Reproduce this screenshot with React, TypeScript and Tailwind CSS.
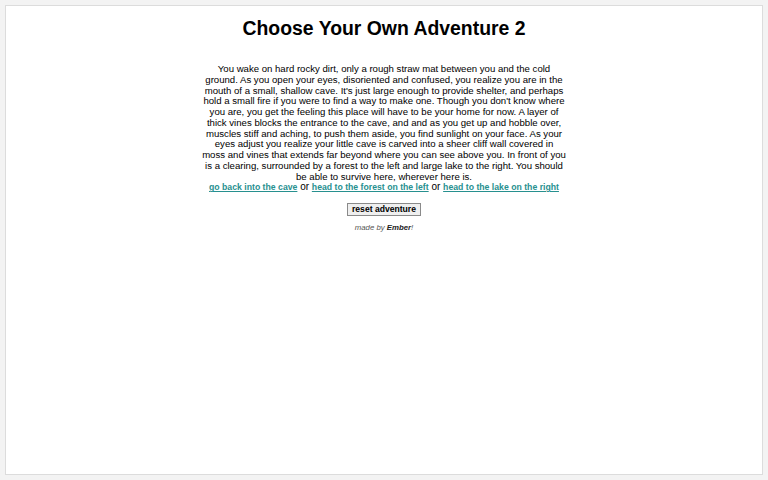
import { useState } from "react";

type Choice = { label: string; key: string };

const intro =
  "You wake on hard rocky dirt, only a rough straw mat between you and the cold ground. As you open your eyes, disoriented and confused, you realize you are in the mouth of a small, shallow cave. It's just large enough to provide shelter, and perhaps hold a small fire if you were to find a way to make one. Though you don't know where you are, you get the feeling this place will have to be your home for now. A layer of thick vines blocks the entrance to the cave, and and as you get up and hobble over, muscles stiff and aching, to push them aside, you find sunlight on your face. As your eyes adjust you realize your little cave is carved into a sheer cliff wall covered in moss and vines that extends far beyond where you can see above you. In front of you is a clearing, surrounded by a forest to the left and large lake to the right. You should be able to survive here, wherever here is.";

const choices: Choice[] = [
  { key: "cave", label: "go back into the cave" },
  { key: "forest", label: "head to the forest on the left" },
  { key: "lake", label: "head to the lake on the right" },
];

export default function App() {
  const [scene, setScene] = useState("start");

  return (
    <div className="min-h-screen bg-[#f3f3f3] p-[5px] font-['Liberation_Sans',Arial,sans-serif]">
      <div className="h-[470px] border border-[#dcdcdc] bg-white">
        <h1 className="mt-[10px] text-center text-[19.4px] font-bold leading-[24px] text-black">
          Choose Your Own Adventure 2
        </h1>

        <div className="mx-auto mt-[24px] w-[364px] text-center text-[9.6px] leading-[10.75px] text-black">
          <p>{intro}</p>
          <p>
            {choices.map((c, i) => (
              <span key={c.key}>
                {i > 0 && <span className="text-[10px]"> or </span>}
                <a
                  href="#"
                  onClick={(e) => {
                    e.preventDefault();
                    setScene(c.key);
                  }}
                  className="text-[8.7px] font-bold text-[#27908f] underline"
                >
                  {c.label}
                </a>
              </span>
            ))}
          </p>
        </div>

        <div className="mt-[10px] flex justify-center">
          <button
            onClick={() => setScene("start")}
            className="h-[13px] border border-[#8a8a8a] bg-[#efefef] px-[4px] text-[8.6px] font-bold leading-[11px] text-black"
            data-scene={scene}
          >
            reset adventure
          </button>
        </div>

        <p className="mt-[6px] text-center text-[7.8px] italic text-[#555]">
          made by <b className="text-[#222]">Ember</b>!
        </p>
      </div>
    </div>
  );
}
